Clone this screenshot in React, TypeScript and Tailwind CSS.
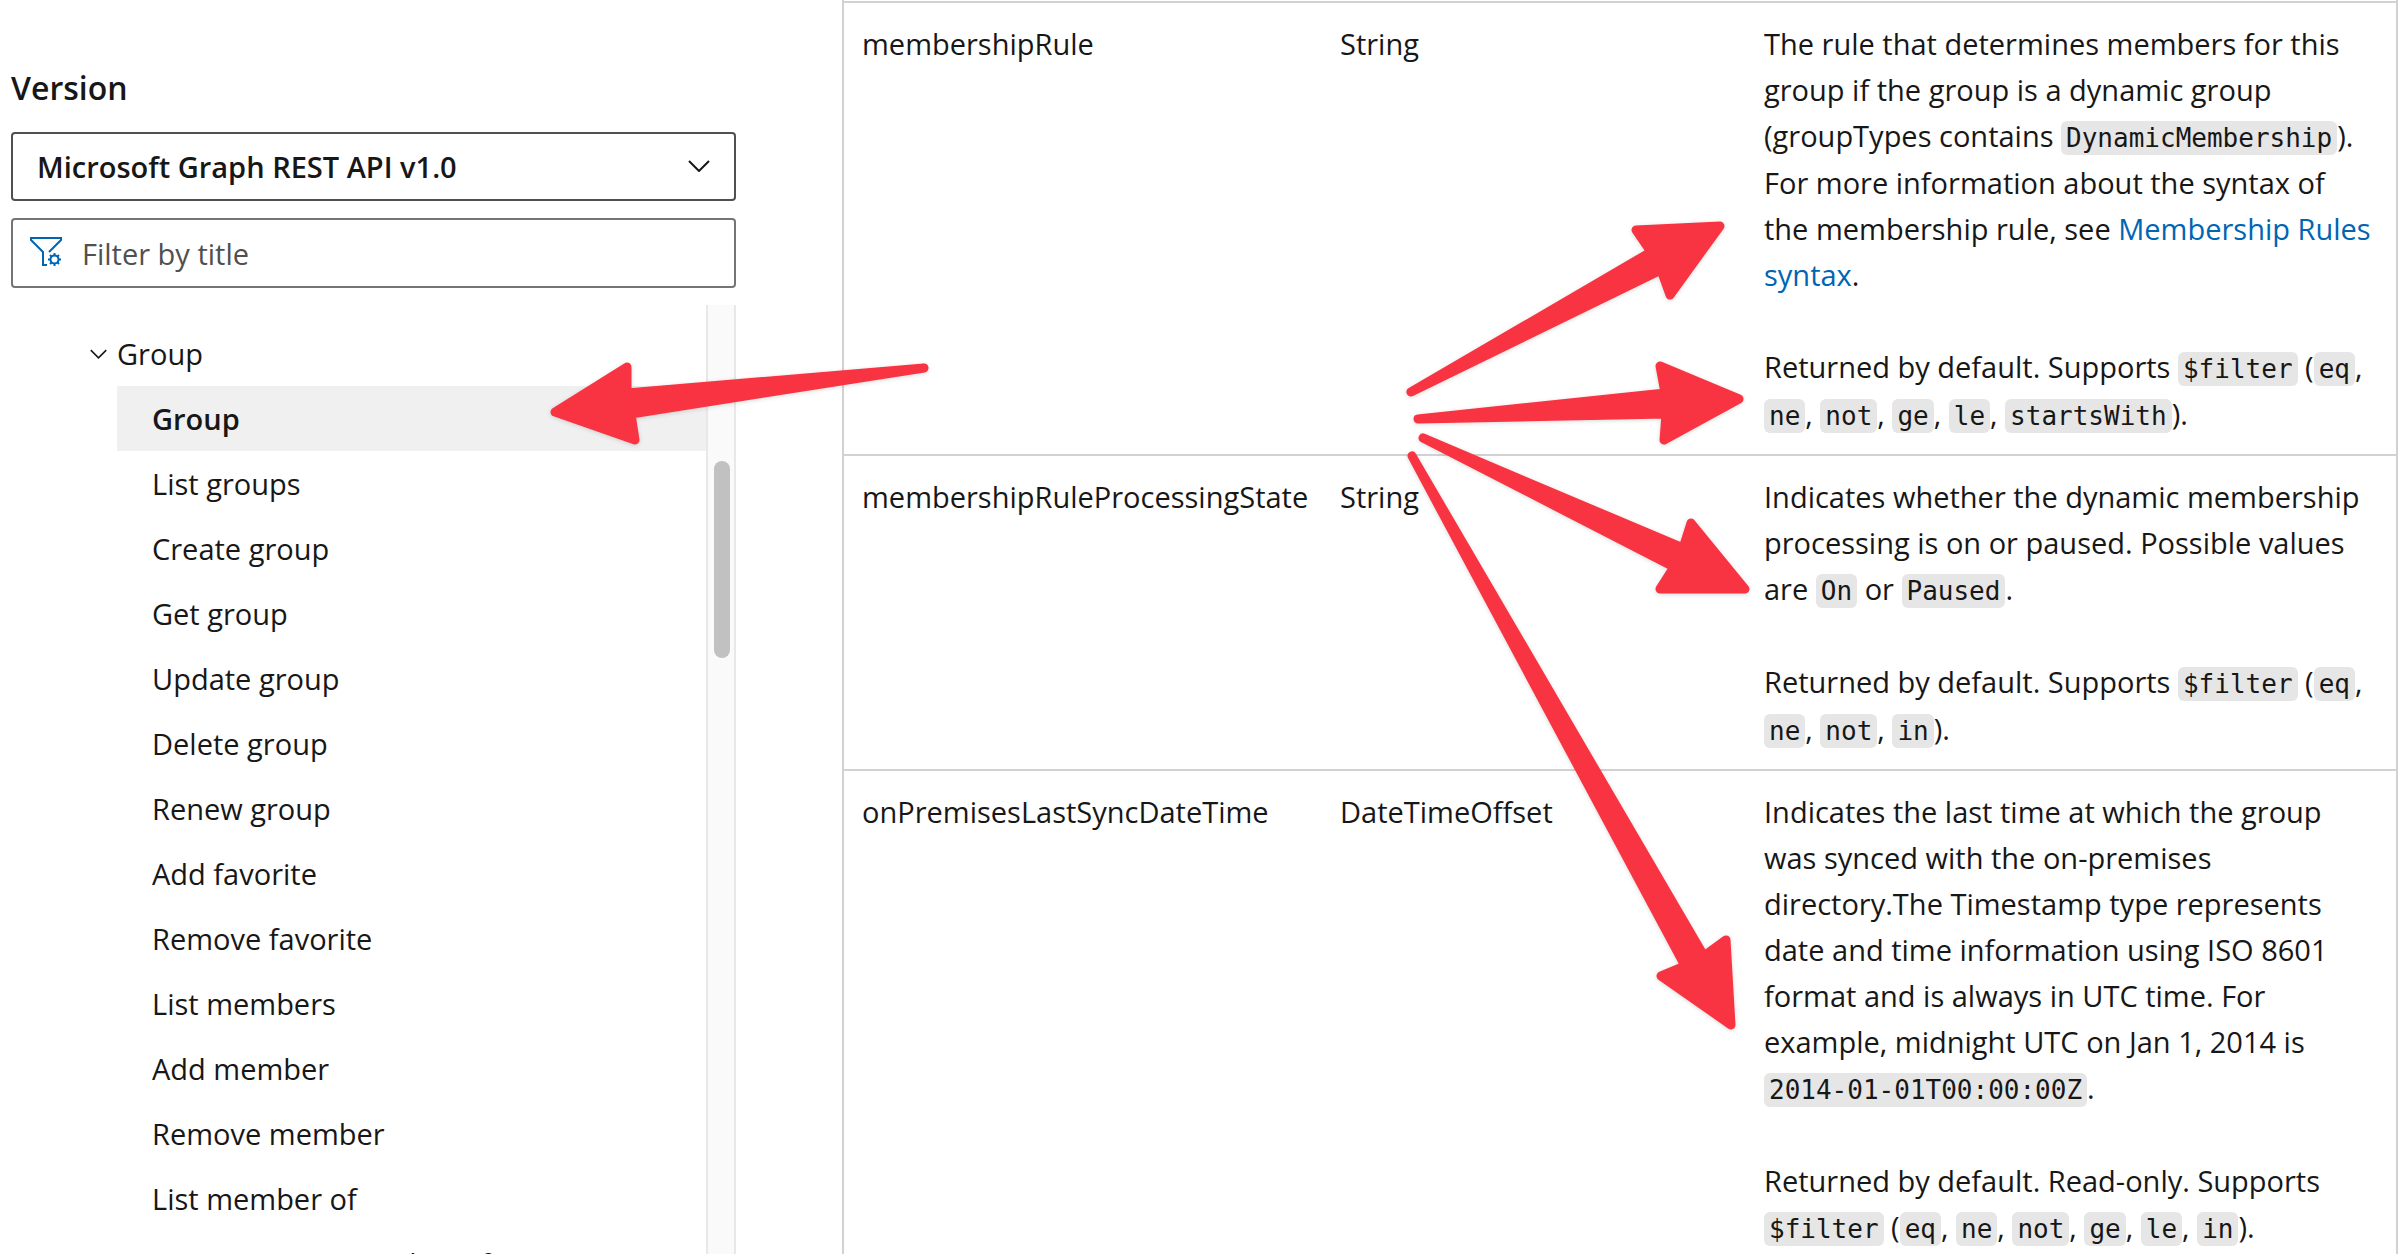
import React from 'react';

interface PropertyRow {
  name: string;
  type: string;
  description: React.ReactNode;
}

const groupLinks = [
  'Group',
  'List groups',
  'Create group',
  'Get group',
  'Update group',
  'Delete group',
  'Renew group',
  'Add favorite',
  'Remove favorite',
  'List members',
  'Add member',
  'Remove member',
  'List member of',
  'List transitive member of',
];

// Outlines of the arrows, in page pixels
const arrows = [
  'M924 368 L627 393 L627 367 L555 412 L635 440 L631 414 Z',
  'M1411 392 L1651 252 L1636 230 L1720 226 L1670 295 L1661 270 Z',
  'M1418 419 L1665 393 L1660 366 L1739 399 L1664 440 L1666 414 Z',
  'M1423 438 L1683 548 L1691 523 L1745 589 L1660 589 L1674 567 Z',
  'M1412 456 L1704 956 L1726 940 L1731 1025 L1661 976 L1685 966 Z',
];

const Code: React.FC<{ children: React.ReactNode }> = ({ children }) => (
  <code className="rounded-md bg-[#e6e6e6] px-[5px] py-0.5 font-['DejaVu_Sans_Mono',monospace] text-[26px] leading-11">
    {children}
  </code>
);

const Operators: React.FC<{ names: string[] }> = ({ names }) => (
  <>
    <Code>$filter</Code> (
    {names.map((name, index) => (
      <React.Fragment key={name}>
        {index > 0 && ', '}
        <Code>{name}</Code>
      </React.Fragment>
    ))}
    ).
  </>
);

const rows: PropertyRow[] = [
  {
    name: 'membershipRule',
    type: 'String',
    description: (
      <>
        The rule that determines members for this group if the group is a dynamic group (groupTypes contains{' '}
        <Code>DynamicMembership</Code>). For more information about the syntax of the membership rule, see{' '}
        <a href="#membership-rules" className="text-[#0065b3]">Membership Rules syntax</a>.
        <br />
        <br />
        Returned by default. Supports <Operators names={['eq', 'ne', 'not', 'ge', 'le', 'startsWith']} />
      </>
    ),
  },
  {
    name: 'membershipRuleProcessingState',
    type: 'String',
    description: (
      <>
        Indicates whether the dynamic membership processing is on or paused. Possible values are <Code>On</Code> or{' '}
        <Code>Paused</Code>.
        <br />
        <br />
        Returned by default. Supports <Operators names={['eq', 'ne', 'not', 'in']} />
      </>
    ),
  },
  {
    name: 'onPremisesLastSyncDateTime',
    type: 'DateTimeOffset',
    description: (
      <>
        Indicates the last time at which the group was synced with the on-premises directory.The Timestamp type
        represents date and time information using ISO 8601 format and is always in UTC time. For example, midnight
        UTC on Jan 1, 2014 is <Code>2014-01-01T00:00:00Z</Code>.
        <br />
        <br />
        Returned by default. Read-only. Supports <Operators names={['eq', 'ne', 'not', 'ge', 'le', 'in']} />
      </>
    ),
  },
];

const Chevron: React.FC<{ className: string }> = ({ className }) => (
  <svg viewBox="0 0 22 12" className={className} fill="none" stroke="currentColor" strokeWidth="2">
    <path d="M1 1 L11 11 L21 1" />
  </svg>
);

const FilterIcon: React.FC = () => (
  <svg viewBox="0 0 32 30" className="absolute left-[19px] top-[19px] h-[30px] w-8" fill="none" stroke="#0065b3" strokeWidth="2">
    <path d="M17 28 H13 V15 L1 3 V1 H31 V3 L19 15" />
    <circle cx="24.500" cy="22.500" r="4" />
    <path d="M24.500 16 V18.500 M24.500 26.500 V29 M18 22.500 H20.500 M28.500 22.500 H31 M20 18 L21.700 19.700 M27.300 25.300 L29 27 M29 18 L27.300 19.700 M21.700 25.300 L20 27" />
  </svg>
);

const Sidebar: React.FC = () => (
  <aside className="flex w-[736px] shrink-0 flex-col pl-[11px] pt-16">
    <label htmlFor="version" className="text-[32px] font-semibold leading-[48px]">
      Version
    </label>
    <div className="relative mt-5">
      <select
        id="version"
        className="h-[69px] w-full appearance-none rounded border-2 border-[#505050] bg-white px-6 text-[29px] font-semibold"
      >
        <option>Microsoft Graph REST API v1.0</option>
      </select>
      <Chevron className="pointer-events-none absolute right-[26px] top-7 h-3 w-[22px]" />
    </div>
    <div className="relative mt-[17px]">
      <FilterIcon />
      <input
        type="text"
        aria-label="Filter by title"
        placeholder="Filter by title"
        className="h-[70px] w-full rounded border-2 border-[#757575] pl-[69px] pr-4 text-[29px] placeholder:text-[#505050]"
      />
    </div>
    <div className="mt-[17px] flex min-h-0 flex-1">
      <nav className="min-w-0 flex-1 overflow-hidden pt-4">
        <button type="button" className="flex h-[65px] items-center gap-2.5 pl-[79px]">
          <Chevron className="h-2.5 w-[17px]" />
          Group
        </button>
        <ul className="ml-[106px]">
          {groupLinks.map((label, index) => (
            <li key={label}>
              <a
                href="#group"
                className={`flex h-[65px] items-center pl-[35px] ${index === 0 ? 'bg-[#f0f0f0] font-semibold' : ''}`}
              >
                {label}
              </a>
            </li>
          ))}
        </ul>
      </nav>
      <div className="w-[30px] border-x-2 border-[#e8e8e8] bg-[#fafafa] pl-1.5 pr-1 pt-[156px]">
        <div className="h-[197px] rounded-full bg-[#c1c1c1]" />
      </div>
    </div>
  </aside>
);

const App: React.FC = () => {
  return (
    <div className="relative flex h-screen overflow-hidden bg-white font-['Open_Sans','Noto_Sans',sans-serif] text-[29px] leading-[46px] text-[#171717]">
      <Sidebar />
      <main className="ml-[106px] min-w-0 flex-1 self-start border-x-2 border-[#d2d2d2] pt-px">
        <table className="w-full table-fixed text-left">
          <colgroup>
            <col className="w-[478px]" />
            <col className="w-[424px]" />
            <col />
          </colgroup>
          <tbody>
            {rows.map((row) => (
              <tr key={row.name} className="border-t-2 border-[#d2d2d2] align-top">
                <td className="pb-4 pl-[18px] pt-[18px]">{row.name}</td>
                <td className="pb-4 pl-[18px] pt-[18px]">{row.type}</td>
                <td className="pb-4 pl-[18px] pr-6 pt-[18px]">{row.description}</td>
              </tr>
            ))}
          </tbody>
        </table>
      </main>
      <svg
        viewBox="0 0 2398 1254"
        className="pointer-events-none absolute left-0 top-0 w-full drop-shadow-sm"
        fill="#f93442"
        stroke="#f93442"
        strokeWidth="9"
        strokeLinejoin="round"
      >
        {arrows.map((d) => (
          <path key={d} d={d} />
        ))}
      </svg>
    </div>
  );
};

export default App;
